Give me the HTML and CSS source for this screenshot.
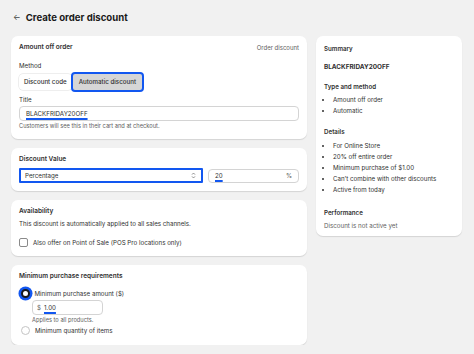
FILE: index.html
```html
<!DOCTYPE html>
<html lang="en">
<head>
    <meta charset="UTF-8">
    <meta name="viewport" content="width=device-width, initial-scale=1.0">
    <title>Create order discount</title>
    <link rel="stylesheet" href="styles.css">
</head>
<body>
    <header class="page-header">
        <span class="back">&larr;</span>
        <h1>Create order discount</h1>
    </header>
    <div class="layout">
        <main class="main-col">
            <section class="card card-method">
                <div class="card-head">
                    <h2>Amount off order</h2>
                    <span class="muted">Order discount</span>
                </div>
                <div class="label">Method</div>
                <div class="segmented">
                    <span class="seg">Discount code</span>
                    <span class="seg seg-active">Automatic discount</span>
                </div>
                <div class="label label-title">Title</div>
                <div class="field"><span class="mark">BLACKFRIDAY20OFF</span></div>
                <p class="help">Customers will see this in their cart and at checkout.</p>
            </section>

            <section class="card card-value">
                <h2>Discount Value</h2>
                <div class="value-row">
                    <div class="field select">
                        <span>Percentage</span>
                        <svg class="chev" width="5" height="7" viewBox="0 0 5 7"><path d="M1 2.6 2.5 1 4 2.6M1 4.4 2.5 6 4 4.4" fill="none" stroke="#666" stroke-width="0.7"/></svg>
                    </div>
                    <div class="field pct">
                        <span class="mark">20</span>
                        <span class="muted">%</span>
                    </div>
                </div>
            </section>

            <section class="card card-avail">
                <h2>Availability</h2>
                <p class="text">This discount is automatically applied to all sales channels.</p>
                <label class="check-row"><span class="checkbox"></span>Also offer on Point of Sale (POS Pro locations only)</label>
            </section>

            <section class="card">
                <h2>Minimum purchase requirements</h2>
                <label class="radio-row radio-first"><span class="radio radio-on"></span>Minimum purchase amount ($)</label>
                <div class="sub">
                    <div class="field money"><span class="muted">$</span> <span class="mark">1.00</span></div>
                    <p class="help">Applies to all products.</p>
                </div>
                <label class="radio-row"><span class="radio"></span>Minimum quantity of items</label>
            </section>
        </main>

        <aside class="card summary">
            <h3>Summary</h3>
            <div class="code">BLACKFRIDAY20OFF</div>
            <h3>Type and method</h3>
            <ul>
                <li>Amount off order</li>
                <li>Automatic</li>
            </ul>
            <h3>Details</h3>
            <ul class="details">
                <li>For Online Store</li>
                <li>20% off entire order</li>
                <li>Minimum purchase of $1.00</li>
                <li>Can&rsquo;t combine with other discounts</li>
                <li>Active from today</li>
            </ul>
            <h3>Performance</h3>
            <p class="muted">Discount is not active yet</p>
        </aside>
    </div>
</body>
</html>
```

FILE: styles.css
```css
body {
    margin: 0;
    padding: 0 12px 0 11px;
    font-family: Inter, 'Noto Sans', sans-serif;
    font-size: 6.2px;
    line-height: 11px;
    background-color: #f1f1f1;
    color: #303030;
}
.page-header {
    display: flex;
    align-items: center;
    gap: 5px;
    height: 36px;
    padding-left: 2px;
    padding-bottom: 2px;
    box-sizing: border-box;
}
.page-header h1 {
    margin: 0;
    font-size: 9.6px;
    font-weight: 700;
    color: #1a1a1a;
}
.back {
    font-size: 8px;
    color: #444;
}
.layout {
    display: flex;
    gap: 9px;
    align-items: flex-start;
}
.main-col {
    width: 296px;
    display: flex;
    flex-direction: column;
    gap: 9px;
}
.card {
    background-color: white;
    border-radius: 7px;
    box-shadow: 0 1px 1px rgba(0, 0, 0, 0.12);
    padding: 6px 8px 8.5px;
}
.card h2 {
    margin: 0;
    font-size: 6.5px;
    font-weight: 600;
}
.card-head {
    display: flex;
    justify-content: space-between;
}
.card-head .muted {
    font-size: 6px;
}
.muted {
    color: #616161;
}
.label {
    margin-top: 7px;
}
.label-title {
    margin-top: 4px;
}
.segmented {
    display: flex;
    gap: 1px;
    margin-top: 2.5px;
}
.seg {
    display: inline-flex;
    align-items: center;
    height: 16px;
    padding: 0 5px;
    border-radius: 4px;
    box-shadow: 0 0 0 0.5px #ddd;
    font-weight: 500;
}
.seg-active {
    background-color: #d6d6d6;
    outline: 2px solid #1257f0;
    border-radius: 2px;
    padding: 0 6px;
}
.field {
    display: flex;
    align-items: center;
    height: 15px;
    padding: 0 6px;
    border: 1px solid #d4d4d4;
    border-radius: 4px;
    box-sizing: border-box;
    margin-top: 1.5px;
}
.mark {
    text-decoration: underline;
    text-decoration-color: #1257f0;
    text-decoration-thickness: 1.5px;
    text-underline-offset: 1.5px;
}
.help {
    margin: 0;
    color: #616161;
    font-size: 5.7px;
    line-height: 10px;
}
.card-method {
    padding-bottom: 7.5px;
}
.card-value {
    padding-bottom: 8px;
}
.card-avail {
    padding-bottom: 7.5px;
}
.value-row {
    display: flex;
    gap: 5px;
    margin-top: 2px;
}
.select {
    width: 184px;
    justify-content: space-between;
    border: 2px solid #1257f0;
    border-radius: 1px;
    padding: 0 5px 0 4px;
}
.pct {
    flex: 1;
    justify-content: space-between;
    height: 14px;
    margin-top: 2px;
}
.text {
    margin: 1px 0 8px;
}
.check-row,
.radio-row {
    display: flex;
    align-items: center;
    gap: 5px;
}
.checkbox {
    width: 7px;
    height: 7px;
    border: 1px solid #8a8a8a;
    border-radius: 2px;
}
.radio {
    width: 7px;
    height: 7px;
    border: 1px solid #c4c4c4;
    border-radius: 50%;
    margin-left: 2px;
}
.radio-first {
    margin-top: 6px;
}
.radio-on {
    width: 5px;
    height: 5px;
    border: 2px solid #1a1a1a;
    background-color: white;
    box-shadow: 0 0 0 2.5px #1257f0;
    margin: 0 0 0 1.5px;
}
.sub {
    padding-left: 13px;
    margin-top: 1.5px;
}
.money {
    width: 71px;
    height: 15px;
    gap: 3px;
    padding-left: 4px;
    margin-top: 0;
}
.summary {
    width: 130px;
    padding-top: 6.5px;
    padding-bottom: 5.5px;
}
.summary h3 {
    margin: 0;
    font-size: 6.2px;
    font-weight: 600;
}
.summary .code {
    margin: 8px 0;
    font-weight: 700;
    font-size: 6.4px;
    color: #303030;
}
.summary ul {
    margin: 2px 0 10px;
    padding-left: 9px;
}
.summary ul.details {
    margin: 3px 0 12px;
}
.summary p {
    margin: 2px 0 0;
}
```
